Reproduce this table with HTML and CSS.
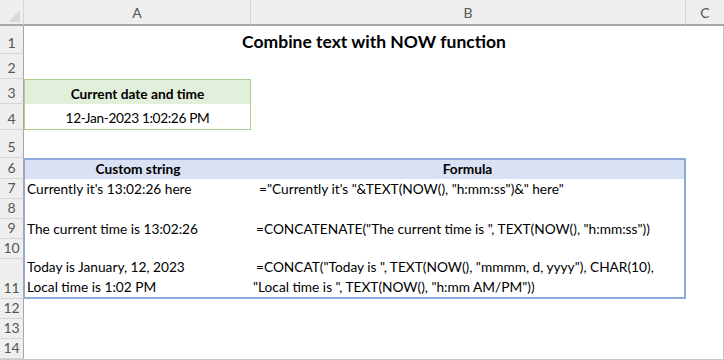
FILE: index.html
```html
<!DOCTYPE html>
<html>
<head>
<meta charset="utf-8">
<link rel="stylesheet" href="styles.css">
</head>
<body>
<div class="sheet">
  <div class="corner"><span class="tri"></span></div>
  <div class="colhead">A</div>
  <div class="colhead">B</div>
  <div class="colhead last">C</div>

  <div class="rowhead r1">1</div>
  <div class="cell title">Combine text with NOW function</div>

  <div class="rowhead">2</div>
  <div class="cell"></div><div class="cell"></div><div class="cell"></div>

  <div class="rowhead">3</div>
  <div class="cell g-head">Current date and time</div><div class="cell"></div><div class="cell"></div>

  <div class="rowhead">4</div>
  <div class="cell g-body">12-Jan-2023 1:02:26 PM</div><div class="cell"></div><div class="cell"></div>

  <div class="rowhead">5</div>
  <div class="cell"></div><div class="cell"></div><div class="cell"></div>

  <div class="rowhead">6</div>
  <div class="cell b-head b-left">Custom string</div><div class="cell b-head b-right">Formula</div><div class="cell"></div>

  <div class="rowhead">7</div>
  <div class="cell b-left txt">Currently it's 13:02:26 here</div><div class="cell b-right txt f7">="Currently it's "&amp;TEXT(NOW(), "h:mm:ss")&amp;" here"</div><div class="cell"></div>

  <div class="rowhead">8</div>
  <div class="cell b-left"></div><div class="cell b-right"></div><div class="cell"></div>

  <div class="rowhead">9</div>
  <div class="cell b-left txt">The current time is 13:02:26</div><div class="cell b-right txt f9">=CONCATENATE("The current time is ", TEXT(NOW(), "h:mm:ss"))</div><div class="cell"></div>

  <div class="rowhead">10</div>
  <div class="cell b-left"></div><div class="cell b-right"></div><div class="cell"></div>

  <div class="rowhead">11</div>
  <div class="cell b-left b-bottom txt multi"><span>Today is January, 12, 2023</span><span>Local time is 1:02 PM</span></div>
  <div class="cell b-right b-bottom txt multi f11"><span class="l1">=CONCAT("Today is ", TEXT(NOW(), "mmmm, d, yyyy"), CHAR(10),</span><span>"Local time is ", TEXT(NOW(), "h:mm AM/PM"))</span></div>
  <div class="cell"></div>

  <div class="rowhead">12</div>
  <div class="cell"></div><div class="cell"></div><div class="cell"></div>
  <div class="rowhead">13</div>
  <div class="cell"></div><div class="cell"></div><div class="cell"></div>
  <div class="rowhead">14</div>
  <div class="cell"></div><div class="cell"></div><div class="cell"></div>
</div>
</body>
</html>
```
FILE: styles.css
```css
* { box-sizing: border-box; }
html, body { margin: 0; padding: 0; background: #fff; }
body { width: 724px; height: 360px; overflow: hidden; }

.sheet {
  display: grid;
  grid-template-columns: 24px 227px 435px 38px;
  grid-template-rows: 26px 28px 25px 25px 26px 28px 21px 20px 20px 20px 20px 40px 20px 20px 20px;
  width: 724px;
  height: 360px;
  border-right: 1px solid #c8c8c8;
  border-bottom: 1px solid #c8c8c8;
  font-family: "Lato", "Roboto", sans-serif;
  font-size: 13.7px;
  color: #000;
}

.corner {
  background: #efefef;
  border-right: 1px solid #d6d6d6;
  border-bottom: 2px solid #a6a6a6;
  position: relative;
}
.tri {
  position: absolute;
  left: 8px;
  top: 10px;
  width: 0;
  height: 0;
  border-left: 12px solid transparent;
  border-bottom: 12px solid #d9d9d9;
}

.colhead {
  background: #efefef;
  border-right: 1px solid #d6d6d6;
  border-bottom: 2px solid #a6a6a6;
  color: #555;
  font-size: 14px;
  display: flex;
  align-items: center;
  justify-content: center;
  padding-top: 1px;
}
.colhead.last { border-right: none; }

.rowhead {
  background: #efefef;
  border-right: 1px solid #a6a6a6;
  border-bottom: 1px solid #d6d6d6;
  color: #555;
  font-size: 14px;
  display: flex;
  align-items: flex-end;
  justify-content: center;
  padding-bottom: 1px;
  line-height: 18px;
}

.cell {
  display: flex;
  align-items: flex-end;
  padding: 0 2px 1px 2px;
  line-height: 19px;
  white-space: nowrap;
}

.title {
  grid-column: 2 / 5;
  justify-content: center;
  font-weight: 700;
  font-size: 17.5px;
  padding-bottom: 3px;
}

.g-head {
  background: #e2efda;
  border: 1px solid #a9d08e;
  border-bottom: none;
  justify-content: center;
  font-weight: 700;
  padding-bottom: 1px;
}
.g-body {
  border: 1px solid #a9d08e;
  border-top: none;
  justify-content: center;
  padding-bottom: 2px;
  letter-spacing: -0.35px;
}

.b-head {
  background: #d9e1f2;
  border-top: 2px solid #8ea9db;
  justify-content: center;
  font-weight: 700;
}
.b-left { border-left: 1px solid #8ea9db; }
.b-right { border-right: 2px solid #8ea9db; }
.b-bottom { border-bottom: 2px solid #8ea9db; }

.txt { padding-left: 2px; }
.f7 { padding-left: 8px; }
.f9 { padding-left: 5px; }
.f11 { padding-left: 2px; }

.multi {
  flex-direction: column;
  align-items: flex-start;
  justify-content: flex-end;
  line-height: 20px;
  padding-bottom: 0;
}
.f11 .l1 { padding-left: 3px; }
```
